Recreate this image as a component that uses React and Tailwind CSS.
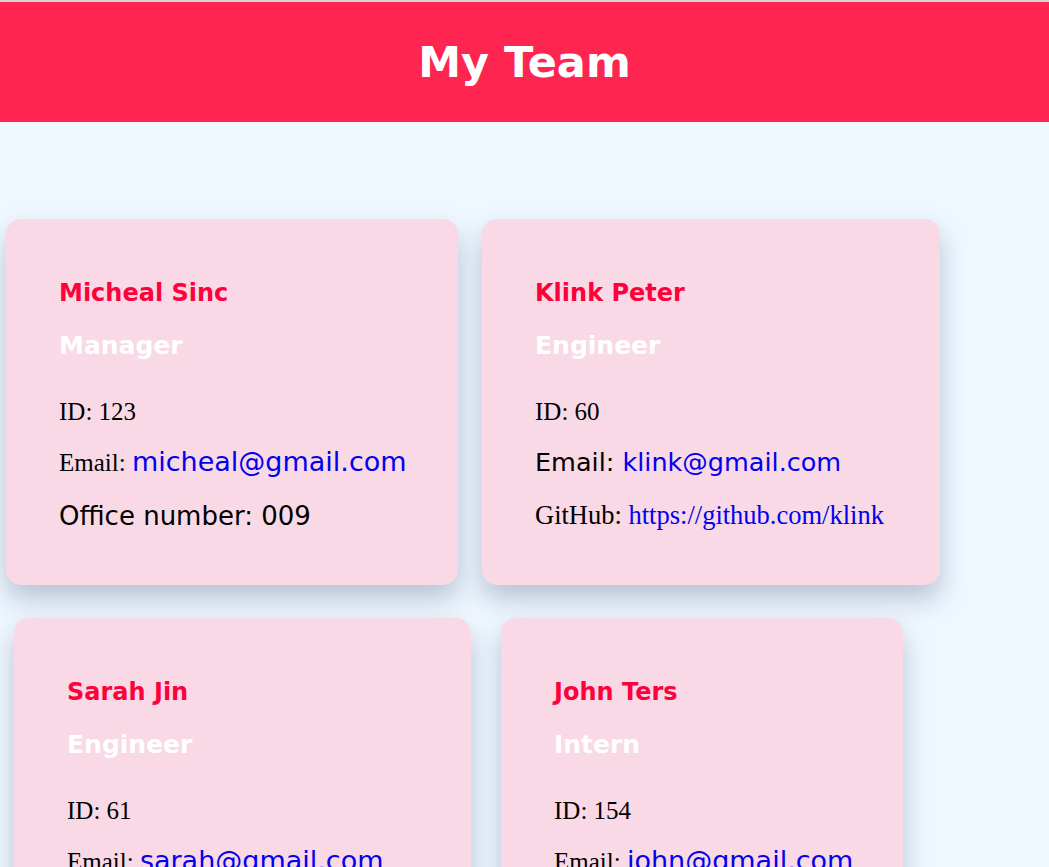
import React from 'react';

const sans = "font-['DejaVu_Sans',sans-serif]";
const serif = "font-['Liberation_Serif',serif]";

const team = [
    { name: 'Micheal Sinc', role: 'Manager', id: 123, email: 'micheal@gmail.com', extra: 'office', value: '009', w: 'w-[452px]', ml: 'ml-[6px]', emailSans: false },
    { name: 'Klink Peter', role: 'Engineer', id: 60, email: 'klink@gmail.com', extra: 'github', value: 'https://github.com/klink', w: 'w-[458px]', ml: 'ml-[24px]', emailSans: true },
    { name: 'Sarah Jin', role: 'Engineer', id: 61, email: 'sarah@gmail.com', extra: 'github', value: 'https://github.com/sarahjin', w: 'w-[457px]', ml: 'ml-[14px]', emailSans: false },
    { name: 'John Ters', role: 'Intern', id: 154, email: 'john@gmail.com', extra: 'school', value: 'UCLA', w: 'w-[402px]', ml: 'ml-[30px]', emailSans: false },
];

function Card({ m }) {
    return (
        <div className={`${m.w} ${m.ml} h-[366px] shrink-0 bg-[#f8d9e5] rounded-[15px] pl-[53px] pt-[58px] shadow-[0_14px_26px_rgba(100,120,150,0.4)]`}>
            <h2 className={`${sans} text-[24px] leading-[32px] font-bold text-[#ff003c]`}>{m.name}</h2>
            <h3 className={`${sans} mt-[21px] text-[25px] leading-[32px] font-bold text-white`}>{m.role}</h3>
            <p className={`${serif} mt-[34px] text-[25px] leading-[32px] text-black`}>ID: {m.id}</p>
            {m.emailSans ? (
                <p className={`${sans} mt-[18px] text-[25.5px] leading-[32px] text-black`}>
                    Email: <a href="#" className="text-[#0000ee]">{m.email}</a>
                </p>
            ) : (
                <p className={`${serif} mt-[18px] text-[25px] leading-[32px] text-black`}>
                    Email: <a href="#" className={`${sans} text-[27px] text-[#0000ee]`}>{m.email}</a>
                </p>
            )}
            {m.extra === 'office' && (
                <p className={`${sans} mt-[21px] text-[26px] leading-[32px] text-black`}>Office number: {m.value}</p>
            )}
            {m.extra === 'github' && (
                <p className={`${serif} mt-[21px] text-[26.5px] leading-[32px] text-black`}>
                    GitHub: <a href="#" className="text-[#0000ee]">{m.value}</a>
                </p>
            )}
            {m.extra === 'school' && (
                <p className={`${serif} mt-[21px] text-[26px] leading-[32px] text-black`}>School: {m.value}</p>
            )}
        </div>
    );
}

export default function App() {
    return (
        <div className="min-h-screen bg-[#eff7ff]">
            <div className="h-[2px] bg-[#d4d4d4]"></div>
            <header className="h-[120px] bg-[#fe2550] flex items-center justify-center">
                <h1 className={`${sans} text-[43px] font-bold text-white`}>My Team</h1>
            </header>
            <main className="pt-[97px] pb-10 flex flex-wrap gap-y-[33px]">
                {team.map((m) => (
                    <Card key={m.name} m={m} />
                ))}
            </main>
        </div>
    );
}
